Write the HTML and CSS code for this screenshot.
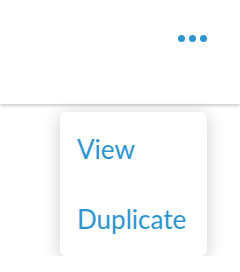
FILE: index.html
```html
<!DOCTYPE html>
<html lang="en">
<head>
  <meta charset="UTF-8">
  <meta name="viewport" content="width=device-width, initial-scale=1.0">
  <title>Actions menu</title>
  <link rel="stylesheet" href="styles.css">
</head>
<body>

  <div class="top-bar">
    <button class="more-button" aria-label="More actions">
      <span class="dot"></span>
      <span class="dot"></span>
      <span class="dot"></span>
    </button>
  </div>

  <div class="menu-area">
    <ul class="action-menu">
      <li><a href="#">View</a></li>
      <li><a href="#">Duplicate</a></li>
    </ul>
  </div>

</body>
</html>
```

FILE: styles.css
```css
body {
  margin: 0;
  font-family: Lato, "Open Sans", sans-serif;
  background-color: #fff;
}

.top-bar {
  position: relative;
  height: 104px;
  display: flex;
  justify-content: flex-end;
  align-items: flex-start;
  padding: 35px 33px 0 0;
  box-sizing: border-box;
  background-color: #fff;
  box-shadow: 0 1px 4px rgba(0, 0, 0, 0.28);
}

.more-button {
  display: flex;
  gap: 4px;
  background: none;
  border: none;
  padding: 0;
  cursor: pointer;
}

.dot {
  width: 7px;
  height: 7px;
  border-radius: 50%;
  background-color: #2e95d0;
}

.menu-area {
  position: relative;
  z-index: 1;
  padding: 8px 0 0 60px;
}

.action-menu {
  list-style-type: none;
  margin: 0;
  padding: 2px 0;
  width: 147px;
  background-color: #fff;
  border-radius: 6px;
  box-shadow: 0 3px 18px rgba(0, 0, 0, 0.2);
}

.action-menu li a {
  display: block;
  height: 70px;
  line-height: 70px;
  padding: 0 17px;
  font-size: 26px;
  color: #2d95cf;
  text-decoration: none;
}
```
